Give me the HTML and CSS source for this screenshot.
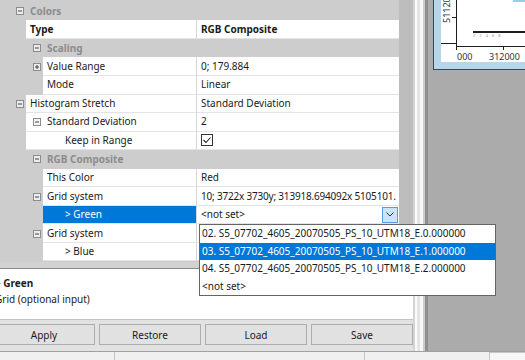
FILE: index.html
```html
<!DOCTYPE html>
<html lang="en">
<head>
    <meta charset="UTF-8">
    <title>grid properties</title>
    <link rel="stylesheet" href="styles.css">
</head>
<body>
    <div class="main">
        <div class="left">
            <div class="inner">
                <div class="gridrow">
                    <div class="grid">
                        <div class="row cat">
                            <div class="gut l0"><svg class="box" viewBox="0 0 8 8"><rect x=".5" y=".5" width="7" height="7" fill="#ececec" stroke="#8c8c8c"/><path d="M2 4h4" stroke="#444"/></svg></div>
                            <div class="name p4">Colors</div>
                        </div>
                        <div class="row">
                            <div class="gut l0"></div>
                            <div class="name p4 bold">Type</div>
                            <div class="val bold">RGB Composite</div>
                        </div>
                        <div class="row cat">
                            <div class="gut l1"><svg class="box" viewBox="0 0 8 8"><rect x=".5" y=".5" width="7" height="7" fill="#ececec" stroke="#8c8c8c"/><path d="M2 4h4" stroke="#444"/></svg></div>
                            <div class="name p4">Scaling</div>
                        </div>
                        <div class="row">
                            <div class="gut l1"><svg class="box" viewBox="0 0 8 8"><rect x=".5" y=".5" width="7" height="7" fill="#ececec" stroke="#8c8c8c"/><path d="M2 4h4M4 2v4" stroke="#444"/></svg></div>
                            <div class="name p4">Value Range</div>
                            <div class="val">0; 179.884</div>
                        </div>
                        <div class="row">
                            <div class="gut l1"></div>
                            <div class="name p4">Mode</div>
                            <div class="val">Linear</div>
                        </div>
                        <div class="row">
                            <div class="gut l0"><svg class="box" viewBox="0 0 8 8"><rect x=".5" y=".5" width="7" height="7" fill="#ececec" stroke="#8c8c8c"/><path d="M2 4h4" stroke="#444"/></svg></div>
                            <div class="name p4">Histogram Stretch</div>
                            <div class="val">Standard Deviation</div>
                        </div>
                        <div class="row">
                            <div class="gut l0"></div>
                            <div class="name p7"><svg class="box inbox" viewBox="0 0 8 8"><rect x=".5" y=".5" width="7" height="7" fill="#f4f4f4" stroke="#8c8c8c"/><path d="M2 4h4" stroke="#444"/></svg>Standard Deviation</div>
                            <div class="val">2</div>
                        </div>
                        <div class="row">
                            <div class="gut l0"></div>
                            <div class="name p39">Keep in Range</div>
                            <div class="val"><svg class="check" viewBox="0 0 12 12"><rect x=".5" y=".5" width="11" height="11" fill="#fff" stroke="#333"/><path d="M2.5 6l2.5 2.5 4.5-5" fill="none" stroke="#222" stroke-width="1.1"/></svg></div>
                        </div>
                        <div class="row cat">
                            <div class="gut l1"><svg class="box" viewBox="0 0 8 8"><rect x=".5" y=".5" width="7" height="7" fill="#ececec" stroke="#8c8c8c"/><path d="M2 4h4" stroke="#444"/></svg></div>
                            <div class="name p4">RGB Composite</div>
                        </div>
                        <div class="row">
                            <div class="gut l1"></div>
                            <div class="name p4">This Color</div>
                            <div class="val">Red</div>
                        </div>
                        <div class="row">
                            <div class="gut l1"><svg class="box" viewBox="0 0 8 8"><rect x=".5" y=".5" width="7" height="7" fill="#ececec" stroke="#8c8c8c"/><path d="M2 4h4" stroke="#444"/></svg></div>
                            <div class="name p4">Grid system</div>
                            <div class="val tight">10; 3722x 3730y; 313918.694092x 5105101.</div>
                        </div>
                        <div class="row">
                            <div class="gut l1"></div>
                            <div class="name p22 sel">&gt; Green</div>
                            <div class="val edit">&lt;not set&gt;<span class="dd"><svg viewBox="0 0 8 5" width="8" height="5"><path d="M.5 .5L4 4 7.5 .5" fill="none" stroke="#333"/></svg></span></div>
                        </div>
                        <div class="row">
                            <div class="gut l1"><svg class="box" viewBox="0 0 8 8"><rect x=".5" y=".5" width="7" height="7" fill="#ececec" stroke="#8c8c8c"/><path d="M2 4h4" stroke="#444"/></svg></div>
                            <div class="name p4">Grid system</div>
                            <div class="val"></div>
                        </div>
                        <div class="row">
                            <div class="gut l1"></div>
                            <div class="name p22">&gt; Blue</div>
                            <div class="val"></div>
                        </div>
                    </div>
                </div>
                <div class="sep"></div>
                <div class="desc">
                    <p class="bold">&gt; Green</p>
                    <p>Grid (optional input)</p>
                </div>
                <div class="btns">
                    <button>Apply</button>
                    <button>Restore</button>
                    <button>Load</button>
                    <button>Save</button>
                </div>
            </div>
            <div class="edge"></div>
        </div>
        <div class="mdi">
            <div class="win">
                <div class="plot">
                    <span class="ylab">5112000</span>
                    <i class="ln vaxis"></i>
                    <i class="ln haxis"></i>
                    <i class="ln stub"></i>
                    <i class="ln ytick"></i>
                    <i class="ln xtick1"></i>
                    <i class="ln xtick2"></i>
                    <i class="ln legend"></i>
                    <i class="blue"></i>
                    <span class="leglab">0 2 4 6 8</span>
                    <span class="xlab x1">000</span>
                    <span class="xlab x2">312000</span>
                </div>
            </div>
        </div>
    </div>
    <div class="status">
        <div class="st st1"></div>
        <div class="st st2"></div>
        <div class="st st3"></div>
        <div class="st st4"></div>
    </div>

    <div class="list">
        <div>02. S5_07702_4605_20070505_PS_10_UTM18_E.0.000000</div>
        <div class="sel">03. S5_07702_4605_20070505_PS_10_UTM18_E.1.000000</div>
        <div>04. S5_07702_4605_20070505_PS_10_UTM18_E.2.000000</div>
        <div>&lt;not set&gt;</div>
    </div>
</body>
</html>
```

FILE: styles.css
```css
*{
    margin: 0;
    padding: 0;
    box-sizing: border-box;
}
body{
    width: 525px;
    height: 360px;
    overflow: hidden;
    position: relative;
    font-family: "Noto Sans", "Liberation Sans", sans-serif;
    font-size: 10px;
    color: #1a1a1a;
    background: #e2e2e2;
}
.bold{
    font-weight: bold;
}
.main{
    display: flex;
    height: 351px;
}
.left{
    display: flex;
    width: 428px;
}
.inner{
    width: 413px;
    display: flex;
    flex-direction: column;
    background: #e2e2e2;
}
.edge{
    flex: 1;
    background: linear-gradient(to right, #d4d4d4 0 2px, #fbfbfb 2px 4px, #e4e4e4 4px 7px, #f6f6f6 7px 10px, #cbcbcb 10px 12px, #8f8f8f 12px 15px);
}

/* property grid */
.gridrow{
    height: 262px;
    margin-right: -3px;
    background: #bdbdbd;
    overflow: hidden;
}
.grid{
    width: 399px;
    height: 100%;
    padding-top: 1.8px;
    background: #cdcdcd;
}
.row{
    display: flex;
    height: 18.56px;
    line-height: 17px;
}
.gut{
    flex: none;
    display: flex;
    justify-content: flex-end;
    align-items: center;
    padding-right: 2px;
}
.l0{
    width: 26px;
}
.l1{
    width: 43px;
}
.box{
    width: 8px;
    height: 8px;
    display: block;
}
.inbox{
    margin-right: 6px;
    flex: none;
}
.name{
    flex: 1;
    display: flex;
    align-items: center;
    white-space: nowrap;
    overflow: hidden;
    background: #fff;
    border-right: 1px solid #d6d6d6;
    border-bottom: 1px solid #e4e4e4;
}
.p4{
    padding-left: 4px;
}
.p7{
    padding-left: 7px;
}
.p22{
    padding-left: 22px;
}
.p39{
    padding-left: 39px;
}
.name.sel{
    background: #0078d7;
    color: #fff;
}
.val{
    width: 202px;
    display: flex;
    align-items: center;
    padding-left: 4px;
    white-space: nowrap;
    overflow: hidden;
    background: #fff;
    border-bottom: 1px solid #e4e4e4;
}
.val.tight{
    letter-spacing: -0.2px;
}
.row.cat .name{
    background: transparent;
    border: none;
    color: #8c8c8c;
    font-weight: bold;
}
.check{
    width: 12px;
    height: 12px;
    display: block;
}
.val.edit{
    justify-content: space-between;
    padding-right: 1px;
}
.dd{
    width: 16px;
    height: 16px;
    flex: none;
    display: flex;
    justify-content: center;
    align-items: center;
    background: #cce4f7;
    border: 1px solid #569de5;
}
.dd svg{
    display: block;
}

/* description and buttons */
.sep{
    height: 6px;
    background: #d2d2d2;
}
.desc{
    height: 52px;
    margin-left: -12px;
    margin-right: -3px;
    padding: 6px 0 0 7px;
    line-height: 16px;
    white-space: nowrap;
    background: #fff;
    border-top: 1px solid #8a8a8a;
    border-right: 1px solid #a8a8a8;
    border-bottom: 1px solid #c4c4c4;
}
.btns{
    display: flex;
    gap: 4px;
    margin: 4px 0 0 -7px;
}
.btns button{
    width: 102px;
    height: 21px;
    flex: none;
    font-family: inherit;
    font-size: 10px;
    color: #1a1a1a;
    background: #e1e1e1;
    border: 1px solid #adadad;
}

/* workspace with map window */
.mdi{
    flex: 1;
    position: relative;
    overflow: hidden;
    background: #ababab;
}
.win{
    position: absolute;
    left: 5px;
    top: -12px;
    width: 110px;
    height: 82px;
    padding: 0 0 7px 7px;
    background: #b8d6ea;
    border: 1px solid #2f4b5b;
}
.plot{
    position: relative;
    height: 100%;
    background: #fff;
    overflow: hidden;
}
.ln{
    position: absolute;
    background: #1e1e1e;
}
.vaxis{
    left: 15px;
    top: 0;
    width: 1px;
    height: 58px;
}
.haxis{
    left: 15px;
    top: 57px;
    width: 100px;
    height: 1px;
}
.stub{
    left: 0;
    top: 54px;
    width: 15px;
    height: 1px;
}
.ytick{
    left: 11px;
    top: 28px;
    width: 4px;
    height: 1px;
}
.xtick1{
    left: 15px;
    top: 57px;
    width: 1px;
    height: 4px;
}
.xtick2{
    left: 62px;
    top: 57px;
    width: 1px;
    height: 4px;
}
.legend{
    left: 32px;
    top: 42px;
    width: 70px;
    height: 2px;
}
.blue{
    position: absolute;
    left: 72px;
    top: 10px;
    width: 14px;
    height: 3px;
    background: #8fd2ee;
}
.leglab{
    position: absolute;
    left: 32px;
    top: 44px;
    font-size: 4px;
    line-height: 5px;
    word-spacing: 3px;
    color: #9a9a9a;
}
.ylab{
    position: absolute;
    left: 1px;
    top: 34px;
    font-size: 9px;
    line-height: 9px;
    color: #333;
    transform-origin: 0 0;
    transform: rotate(-90deg);
    white-space: nowrap;
}
.xlab{
    position: absolute;
    top: 62px;
    font-size: 9px;
    line-height: 11px;
    color: #333;
}
.x1{
    left: 16px;
}
.x2{
    left: 48px;
}

/* status bar */
.status{
    display: flex;
    height: 9px;
    border-top: 1px solid #a0a0a0;
    background: #f0f0f0;
}
.st{
    border-right: 1px solid #c6c6c6;
}
.st1{
    width: 115px;
}
.st2{
    width: 250px;
}
.st3{
    width: 125px;
}
.st4{
    flex: 1;
    border-right: none;
    border-top: 1px solid #c6c6c6;
    background: #f7f7f7;
}

/* open dropdown list */
.list{
    position: absolute;
    left: 199px;
    top: 224px;
    width: 297px;
    background: #fff;
    border: 1px solid #646464;
}
.list div{
    height: 17.5px;
    line-height: 17.5px;
    padding-left: 2px;
    white-space: nowrap;
}
.list .sel{
    background: #0078d7;
    color: #fff;
}
```
